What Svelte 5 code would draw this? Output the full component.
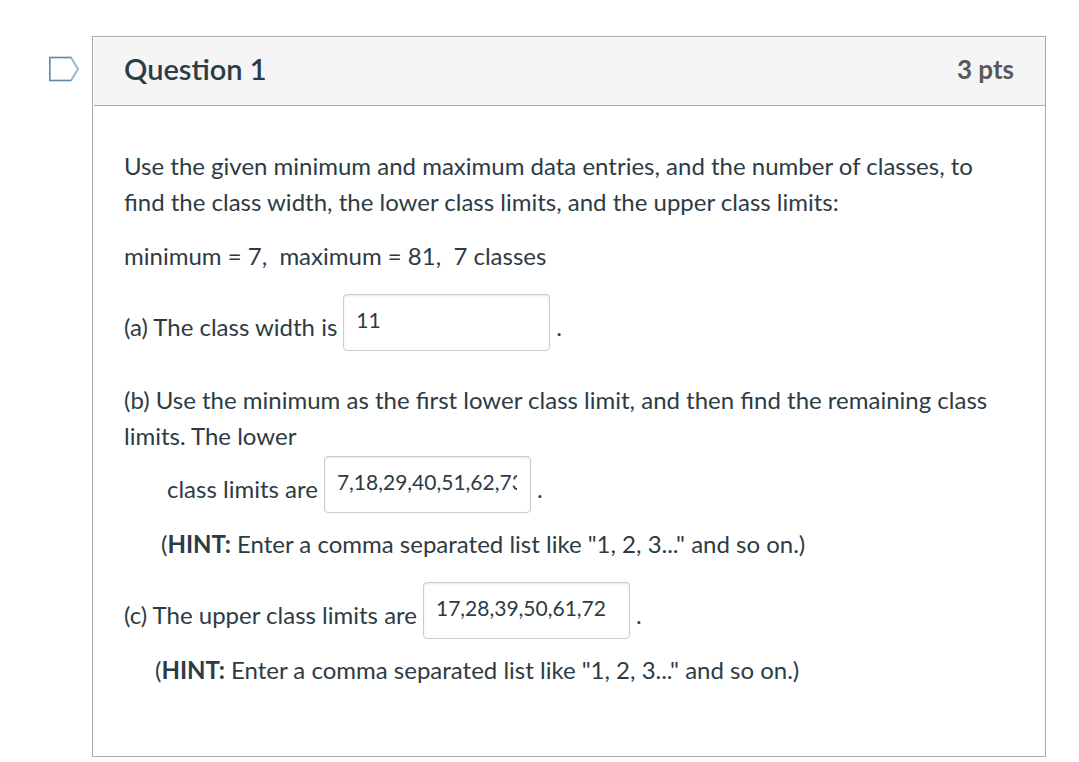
<script>
  let classWidth = '11';
  let lowerLimits = '7,18,29,40,51,62,73';
  let upperLimits = '17,28,39,50,61,72';
  let flagged = false;
</script>

<main class="page">
  <button
    class="flag"
    type="button"
    aria-label="Flag question"
    aria-pressed={flagged}
    on:click={() => (flagged = !flagged)}
  >
    <svg width="32" height="28" viewBox="0 0 32 28" aria-hidden="true">
      <path d="M2 2.5H23L30 14L23 25.5H2Z" fill={flagged ? '#fc5e13' : '#fff'} stroke="#9bb6c9" stroke-width="2" />
      <path d="M23 2.5H1.5V25.5H23" fill="none" stroke="#5f88a5" />
    </svg>
  </button>

  <section class="question">
    <header class="question-header">
      <h2 class="question-name">Question 1</h2>
      <span class="points">3 pts</span>
    </header>

    <div class="question-text">
      <p>
        Use the given minimum and maximum data entries, and the number of classes, to
        find the class width, the lower class limits, and the upper class limits:
      </p>
      <p>minimum = 7,&nbsp; maximum = 81,&nbsp; 7 classes</p>
      <p class="answer-line">
        <label for="class-width">(a) The class width is</label>
        <input id="class-width" type="text" bind:value={classWidth} />
        .
      </p>
      <p class="part-b">
        (b) Use the minimum as the first lower class limit, and then find the remaining
        class limits. The lower
      </p>
      <p class="answer-line indent">
        <label for="lower-limits">class limits are</label>
        <input id="lower-limits" type="text" bind:value={lowerLimits} />
        .
      </p>
      <p class="hint-b">(<strong>HINT:</strong> Enter a comma separated list like "1, 2, 3..." and so on.)</p>
      <p class="answer-line">
        <label for="upper-limits">(c) The upper class limits are</label>
        <input id="upper-limits" type="text" bind:value={upperLimits} />
        .
      </p>
      <p class="hint-c">(<strong>HINT:</strong> Enter a comma separated list like "1, 2, 3..." and so on.)</p>
    </div>
  </section>
</main>

<style>
  :global(body) {
    margin: 0;
    background: #fff;
  }

  .page {
    display: flex;
    align-items: flex-start;
    padding: 36px 33px 5px 48px;
    color: #2d3b45;
    font-family: Lato, 'Liberation Sans', sans-serif;
    font-size: 24px;
    line-height: 36px;
  }

  .flag {
    flex: none;
    width: 32px;
    height: 28px;
    margin: 19px 12px 0 0;
    padding: 0;
    border: 0;
    background: none;
    cursor: pointer;
  }

  .flag svg {
    display: block;
  }

  .question {
    flex: 1;
    min-width: 0;
    box-sizing: border-box;
    padding: 1px 0 0 1px;
    border: 1px solid #aaa;
  }

  .question-header {
    display: flex;
    align-items: center;
    justify-content: space-between;
    padding: 13px 31px 18px 30px;
    border-bottom: 1px solid #aaa;
    background: #f5f5f5;
  }

  .question-name {
    margin: 0;
    font-size: 29px;
    font-weight: 600;
  }

  .points {
    color: #595959;
    font-size: 26px;
    font-weight: 700;
  }

  .question-text {
    padding: 42px 30px 68px;
  }

  p {
    margin: 0 0 18px;
  }

  p:last-child {
    margin-bottom: 0;
  }

  .answer-line {
    display: flex;
    align-items: flex-end;
    gap: 6px;
    margin: 20px 0 13px;
    line-height: 48px;
  }

  input {
    box-sizing: border-box;
    width: 207px;
    height: 57px;
    padding: 0 13px 6px 12px;
    border: 1px solid #c7cdd1;
    border-radius: 4px;
    background: #fff;
    box-shadow: inset 0 1px 2px rgba(0, 0, 0, 0.1);
    color: #2d3b45;
    font-family: inherit;
    font-size: 21px;
  }

  .part-b {
    margin: 31px 0 2px;
  }

  .indent {
    margin-top: 0;
    padding-left: 43px;
  }

  .hint-b {
    padding-left: 37px;
  }

  .hint-c {
    padding-left: 31px;
  }
</style>
